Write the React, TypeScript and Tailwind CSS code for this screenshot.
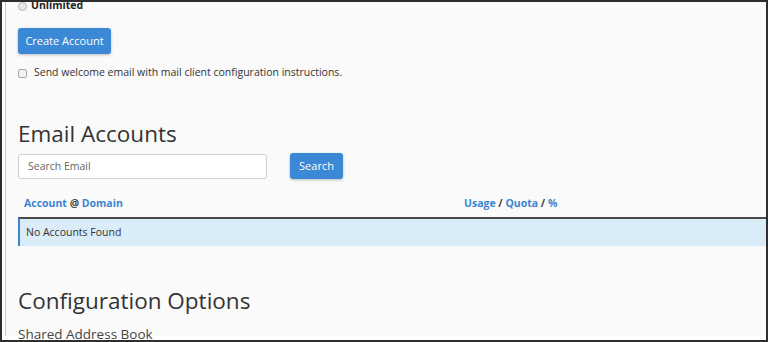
export default function App() {
  return (
    <div
      className="h-[342px] w-[768px] overflow-hidden border-2 border-[#2e2e2e] bg-white text-[#333]"
      style={{ fontFamily: '"Open Sans", "Noto Sans", sans-serif' }}
    >
      <div className="ml-[3px] h-full border-l border-[#c8c8c8] bg-[#fafafa] pl-[12px]">
        <label className="-mt-[4px] flex h-[16px] items-center gap-[4px] text-[10.5px] font-bold text-[#222]">
          <span className="h-[9px] w-[9px] rounded-full border border-[#b5b5b5] bg-[#e9e9e9]" />
          Unlimited
        </label>

        <button
          type="button"
          className="mt-[14px] h-[26px] w-[93px] rounded-[3px] bg-[#3a88d6] text-[11px] text-white shadow-[0_1px_3px_rgba(0,0,0,0.25)]"
        >
          Create Account
        </button>

        <label className="mt-[11px] flex h-[16px] items-center gap-[7px] text-[10.5px] text-[#333]">
          <span className="h-[9px] w-[9px] rounded-[2px] border border-[#a9a9a9] bg-[#f1f1f1]" />
          Send welcome email with mail client configuration instructions.
        </label>

        <h2 className="mt-[39px] text-[22.5px] leading-[1.2] text-[#333]">Email Accounts</h2>

        <div className="mt-[6px] flex items-center">
          <input
            placeholder="Search Email"
            className="h-[25px] w-[249px] rounded-[3px] border border-[#d0d0d0] bg-white px-[9px] text-[10.5px] text-[#555] placeholder:text-[#666] focus:outline-none"
          />
          <button
            type="button"
            className="ml-[23px] h-[26px] w-[53px] rounded-[3px] bg-[#3a88d6] text-[11px] text-white shadow-[0_1px_3px_rgba(0,0,0,0.25)]"
          >
            Search
          </button>
        </div>

        <div className="mt-[17px] flex h-[16px] items-center pl-[6px] text-[10.5px] font-bold">
          <div className="w-[440px]">
            <span className="text-[#3a85cf]">Account</span>
            <span className="text-[#444]"> @ </span>
            <span className="text-[#3a85cf]">Domain</span>
          </div>
          <div>
            <span className="text-[#3a85cf]">Usage</span>
            <span className="text-[#444]"> / </span>
            <span className="text-[#3a85cf]">Quota</span>
            <span className="text-[#444]"> / </span>
            <span className="text-[#3a85cf]">%</span>
          </div>
        </div>

        <div className="mt-[5px] flex h-[29px] items-center border-t-2 border-l-2 border-t-[#4a4a4a] border-l-[#3a85cf] bg-[#d9ecf8] pl-[6px] text-[10.5px] text-[#333]">
          No Accounts Found
        </div>

        <h2 className="mt-[41px] text-[22.5px] leading-[1.2] text-[#333]">Configuration Options</h2>

        <div className="mt-[10px] text-[13.5px] leading-[1.5] text-[#444]">Shared Address Book</div>
      </div>
    </div>
  );
}
